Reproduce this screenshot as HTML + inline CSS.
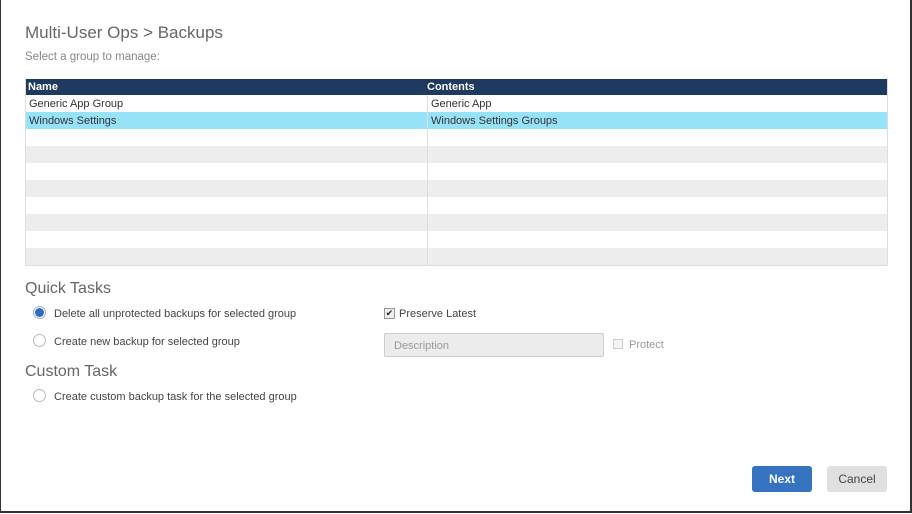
<!DOCTYPE html>
<html><head><style>
body{margin:0;width:912px;height:514px;overflow:hidden;background:#fff;font-family:"Segoe UI","Liberation Sans",sans-serif;}
.frame{position:absolute;left:0;top:0;width:909px;height:511px;border-left:1px solid #333;border-right:2px solid #333;border-bottom:2px solid #333;}
.t{position:absolute;color:#444;white-space:nowrap}
.tbl{position:absolute;left:25px;top:79px;width:861px;border:1px solid #ddd;border-top:none}
.row{height:17px;font-size:11px;line-height:19px;position:relative;color:#333}
.row span{position:absolute;top:0}
.hd{background:#1f3a5f;color:#fff;font-weight:bold;height:16px;line-height:17px}
.g{background:#ededed}.sel{background:#96e2f8}
.div{position:absolute;left:401px;top:16px;bottom:0;width:1px;background:#ddd}
.radio{position:absolute;width:11px;height:11px;border:1px solid #bbb;border-radius:50%;background:#fff}
.btn{position:absolute;top:466px;height:26px;border-radius:3px;font-size:12px;line-height:27px;text-align:center}
</style></head><body>
<div class="frame"></div>
<div class="t" style="left:25px;top:23px;font-size:17px;color:#666">Multi-User Ops &gt; Backups</div>
<div class="t" style="left:25px;top:51px;font-size:11.5px;color:#888">Select a group to manage:</div>
<div class="tbl">
<div class="row hd"><span style="left:2px">Name</span><span style="left:401px">Contents</span></div>
<div class="row"><span style="left:3px">Generic App Group</span><span style="left:405px">Generic App</span></div>
<div class="row sel"><span style="left:3px">Windows Settings</span><span style="left:405px">Windows Settings Groups</span></div>
<div class="row"></div><div class="row g"></div><div class="row"></div><div class="row g"></div><div class="row"></div><div class="row g"></div><div class="row"></div><div class="row g"></div>
<div class="div"></div>
</div>
<div class="t" style="left:25px;top:280px;font-size:16px;color:#666">Quick Tasks</div>
<div class="radio" style="left:33px;top:306px;border-color:#aac"><div style="position:absolute;left:1px;top:1px;width:9px;height:9px;border-radius:50%;background:#2f6bbf"></div></div>
<div class="t" style="left:54px;top:308px;font-size:11px">Delete all unprotected backups for selected group</div>
<div class="radio" style="left:33px;top:334px"></div>
<div class="t" style="left:54px;top:336px;font-size:11px">Create new backup for selected group</div>
<div style="position:absolute;left:384px;top:308px;width:9px;height:9px;border:1px solid #999;background:#eee;font-size:9px;line-height:9px;text-align:center;color:#222">✔</div>
<div class="t" style="left:399px;top:308px;font-size:11px">Preserve Latest</div>
<div style="position:absolute;left:384px;top:333px;width:218px;height:22px;border:1px solid #ccc;background:#ececec;border-radius:2px"></div>
<div class="t" style="left:394px;top:340px;font-size:11px;color:#999">Description</div>
<div style="position:absolute;left:613px;top:339px;width:8px;height:8px;border:1px solid #ccc;background:#f4f4f4"></div>
<div class="t" style="left:629px;top:339px;font-size:11px;color:#999">Protect</div>
<div class="t" style="left:25px;top:363px;font-size:16px;color:#666">Custom Task</div>
<div class="radio" style="left:33px;top:389px"></div>
<div class="t" style="left:54px;top:391px;font-size:11px">Create custom backup task for the selected group</div>
<div class="btn" style="left:752px;width:60px;background:#3572bf;color:#fff;font-weight:bold">Next</div>
<div class="btn" style="left:827px;width:60px;background:#e0e0e0;color:#444">Cancel</div>
</body></html>
